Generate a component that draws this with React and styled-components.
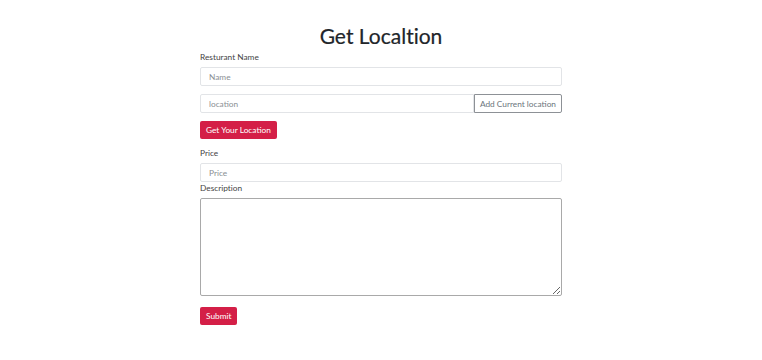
import React from "react";
import styled, { createGlobalStyle } from "styled-components";

const GlobalStyle = createGlobalStyle`
  body {
    margin: 0;
    background: #fff;
    font-family: Lato, "Open Sans", sans-serif;
    font-variant-ligatures: none;
    color: #212529;
  }
`;

const Form = styled.form`
  width: 362px;
  margin: 0 auto;
  display: flex;
  flex-direction: column;
`;

const Title = styled.h1`
  margin: 24px 0 3px;
  font-size: 21px;
  line-height: 24px;
  font-weight: 400;
  -webkit-text-stroke: 0.2px #212529;
  text-align: center;
  color: #212529;
`;

const Label = styled.label`
  font-size: 8.3px;
  line-height: 12px;
  margin-top: ${(p) => p.top || 0}px;
  margin-bottom: 4px;
  color: #444;
`;

const Input = styled.input`
  box-sizing: border-box;
  height: 19px;
  width: 100%;
  padding: 0 8px;
  border: 1px solid #e2e4e7;
  border-radius: 2px;
  font-family: inherit;
  font-size: 8.3px;
  color: #333;
  &::placeholder {
    color: #8a8f94;
  }
`;

const Row = styled.div`
  display: flex;
  margin-top: 8px;
`;

const GroupInput = styled(Input)`
  flex: 1;
  border-radius: 2px 0 0 2px;
`;

const OutlineButton = styled.button`
  box-sizing: border-box;
  height: 19px;
  padding: 0 5px;
  border: 1px solid #8d9196;
  border-radius: 0 2px 2px 0;
  background: #fff;
  font-family: inherit;
  font-size: 8.3px;
  color: #6c757d;
  white-space: nowrap;
`;

const Button = styled.button`
  align-self: flex-start;
  box-sizing: border-box;
  height: 18px;
  margin-top: ${(p) => p.top}px;
  padding: 0 6px;
  border: none;
  border-radius: 2px;
  background: #d41f47;
  color: #fff;
  font-family: inherit;
  font-size: 8.3px;
`;

const TextArea = styled.textarea`
  box-sizing: border-box;
  height: 98px;
  width: 100%;
  border: 1px solid #a9a9a9;
  border-radius: 2px;
  font-family: inherit;
  font-size: 8.3px;
`;

const App = () => {
  return (
    <>
      <GlobalStyle />
      <Form onSubmit={(e) => e.preventDefault()}>
        <Title>Get Localtion</Title>
        <Label>Resturant Name</Label>
        <Input placeholder="Name" />
        <Row>
          <GroupInput placeholder="location" />
          <OutlineButton type="button">Add Current location</OutlineButton>
        </Row>
        <Button type="button" top={8}>Get Your Location</Button>
        <Label top={8}>Price</Label>
        <Input placeholder="Price" />
        <Label>Description</Label>
        <TextArea />
        <Button type="submit" top={11}>Submit</Button>
      </Form>
    </>
  );
};

export default App;
